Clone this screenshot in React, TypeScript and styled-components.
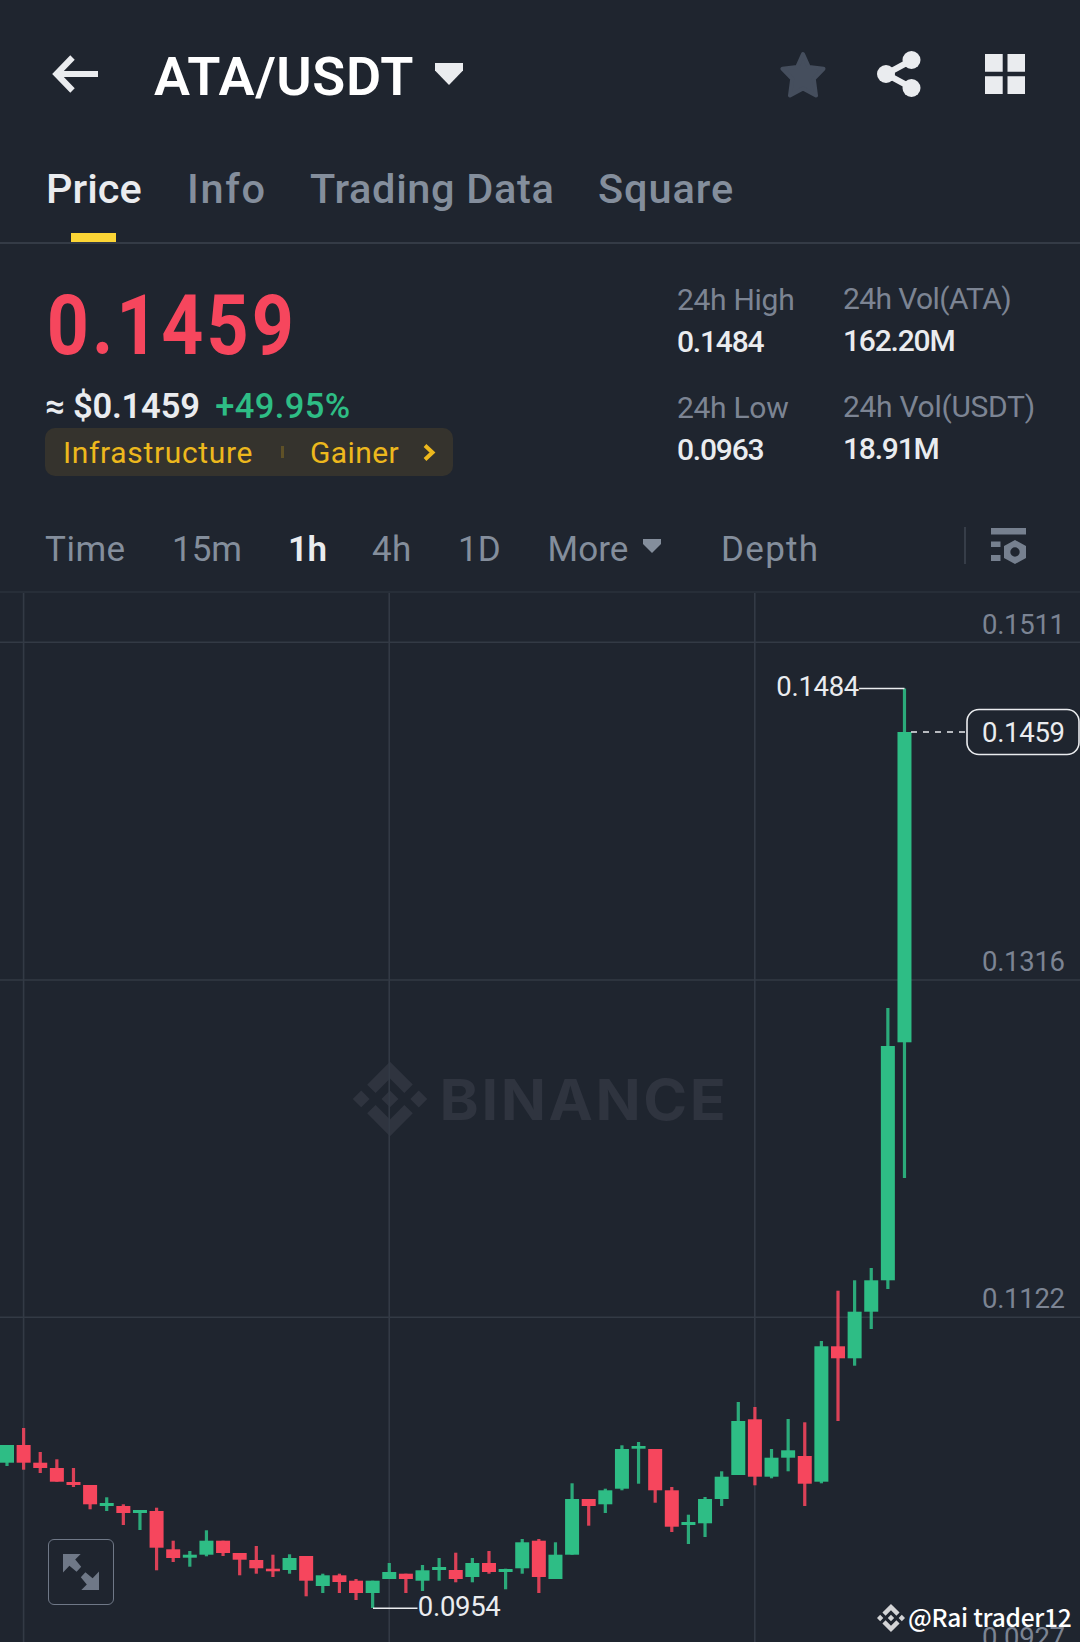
import React from "react";
import styled, { createGlobalStyle } from "styled-components";

const UP = "#2ebd85";
const DOWN = "#f6465d";
const GREY = "#848e9c";
const LIGHT = "#eaecef";
const GRID = "#333a45";

const GlobalStyle = createGlobalStyle`
  body {
    margin: 0;
    background: #1f252f;
    font-family: Roboto, "Liberation Sans", sans-serif;
  }
`;

const Screen = styled.main`
  display: flex;
  flex-direction: column;
  width: 1080px;
  height: 1642px;
  overflow: hidden;
  background: #1f252f;
  color: ${LIGHT};
`;

const Header = styled.header`
  display: flex;
  align-items: center;
  box-sizing: border-box;
  height: 148px;
  padding: 0 55px 0 52px;
`;

const Pair = styled.h1`
  display: flex;
  align-items: center;
  gap: 21px;
  margin: 0 auto 0 56px;
  color: #fff;
`;

const PairName = styled.span`
  width: 260px;
  padding-top: 5px;
  font-size: 54px;
  font-weight: 600;
  line-height: 60px;
  letter-spacing: 0.6px;
  white-space: nowrap;
`;

const Actions = styled.div`
  display: flex;
  align-items: center;
`;

const StarIcon = styled.svg`
  margin-right: 51px;
`;

const ShareIcon = styled.svg`
  margin-right: 64px;
`;

const Tabs = styled.nav`
  display: flex;
  height: 94px;
  padding-left: 46px;
  border-bottom: 2px solid #343b46;
`;

const Tab = styled.a<{ $active?: boolean; $slot: number; $track: number }>`
  position: relative;
  box-sizing: border-box;
  width: ${(p) => p.$slot}px;
  padding-bottom: 12px;
  color: ${(p) => (p.$active ? LIGHT : GREY)};
  font-size: 41.5px;
  font-weight: 500;
  line-height: 82px;
  letter-spacing: ${(p) => p.$track}px;
  white-space: nowrap;

  &::after {
    content: "";
    display: ${(p) => (p.$active ? "block" : "none")};
    position: absolute;
    bottom: 0;
    left: 25px;
    width: 45px;
    height: 9px;
    background: #fcd535;
  }
`;

const Quote = styled.section`
  display: flex;
  box-sizing: border-box;
  height: 263px;
  padding: 37px 0 0 45px;
`;

const PriceColumn = styled.div`
  width: 632px;
`;

const LastPrice = styled.div`
  transform: scaleX(0.88);
  transform-origin: left;
  color: ${DOWN};
  font-size: 83.5px;
  font-weight: 700;
  line-height: 90px;
  letter-spacing: 3.4px;
  padding-left: 2px;
`;

const Converted = styled.div`
  display: flex;
  gap: 15.5px;
  margin-top: 14px;
  height: 43px;
  font-size: 34.5px;
  font-weight: 600;
  line-height: 43px;
  letter-spacing: -0.2px;
  white-space: nowrap;
`;

const Change = styled.span`
  color: ${UP};
  font-weight: 500;
  letter-spacing: 0.4px;
`;

const Tags = styled.div`
  display: flex;
  align-items: center;
  box-sizing: border-box;
  width: 408px;
  height: 48px;
  padding-left: 18px;
  border-radius: 10px;
  background: #35332d;
  color: #edb81d;
  font-size: 30px;
  line-height: 48px;
`;

const TagName = styled.span<{ $slot: number; $track: number }>`
  width: ${(p) => p.$slot}px;
  padding-top: 1px;
  letter-spacing: ${(p) => p.$track}px;
`;

const TagRule = styled.i`
  width: 3px;
  height: 12px;
  margin-right: 26px;
  background: #5f5127;
`;

const Stats = styled.div`
  display: flex;
  padding-top: 1px;
`;

const StatColumn = styled.div<{ $slot: number; $lift?: number }>`
  display: flex;
  flex-direction: column;
  gap: 30px;
  width: ${(p) => p.$slot}px;
  margin-top: -${(p) => p.$lift ?? 0}px;
`;

const Stat = styled.div`
  display: flex;
  flex-direction: column;
  gap: 6px;
  font-size: 30px;
  line-height: 36px;
  white-space: nowrap;
`;

const StatLabel = styled.span<{ $track?: number }>`
  color: #7c8493;
  letter-spacing: ${(p) => p.$track ?? -0.3}px;
`;

const StatValue = styled.span`
  letter-spacing: -1.2px;
  font-weight: 500;
`;

const Intervals = styled.nav`
  display: flex;
  align-items: center;
  height: 84px;
  padding-left: 45px;
  border-bottom: 2px solid #272e38;
`;

const Interval = styled.a<{ $active?: boolean; $slot: number; $track: number }>`
  display: flex;
  align-items: center;
  width: ${(p) => p.$slot}px;
  color: ${(p) => (p.$active ? LIGHT : GREY)};
  font-size: 35px;
  font-weight: ${(p) => (p.$active ? 600 : 400)};
  letter-spacing: ${(p) => p.$track}px;
  white-space: nowrap;
`;

const MoreCaret = styled.svg`
  margin: 0 0 7px 14px;
`;

const BarRule = styled.i`
  width: 2px;
  height: 37px;
  margin: 0 25px 7px 0;
  background: #363d48;
`;

const SettingsIcon = styled.svg`
  margin-bottom: 6px;
`;

const Chart = styled.section`
  position: relative;
  height: 1049px;
`;

const ChartDrawing = styled.svg`
  display: block;
  font-family: Roboto, "Liberation Sans", sans-serif;
  font-size: 27.5px;
`;

const Wordmark = styled.text`
  font-family: Inter, sans-serif;
  font-size: 57px;
  font-weight: 700;
  letter-spacing: 2.5px;
`;

const ExpandButton = styled.button`
  position: absolute;
  left: 48px;
  top: 946px;
  display: flex;
  align-items: center;
  justify-content: center;
  box-sizing: border-box;
  width: 66px;
  height: 66px;
  padding: 0;
  border: 1.5px solid #6f7887;
  border-radius: 6px;
  background: transparent;
`;

const Credit = styled.div`
  position: absolute;
  left: 877px;
  top: 1007px;
  display: flex;
  align-items: center;
  gap: 3px;
  height: 36px;
  color: #fff;
  font-family: "Noto Sans CJK SC", "Noto Sans", sans-serif;
  font-size: 24.5px;
  font-weight: 500;
  line-height: 34px;
  letter-spacing: -0.25px;
  white-space: nowrap;
`;

const CreditName = styled.span`
  margin-top: -2px;
`;

const LOGO =
  "M16.624 13.9202l2.7175 2.7154-7.353 7.353-7.353-7.352 2.7175-2.7164 4.6355 4.6595 4.6356-4.6595zm4.6366-4.6366L24 12l-2.7154 2.7164L18.5682 12l2.6924-2.7164zm-9.272.001l2.7163 2.6914-2.7164 2.7174v-.001L9.2721 12l2.7164-2.7154zm-9.2722-.001L5.4088 12l-2.6914 2.6924L0 12l2.7164-2.7164zM11.9885.0115l7.353 7.329-2.7174 2.7154-4.6356-4.6356-4.6355 4.6595-2.7174-2.7154 7.353-7.353z";

// [rising, high, body top, body bottom, low] in screen rows
type Candle = [number, number, number, number, number];

const CANDLES: Candle[] = [
  [1, 1445, 1445, 1462.7, 1466],
  [0, 1428, 1445, 1462.7, 1469.7],
  [0, 1452, 1462.7, 1468, 1473],
  [0, 1459.3, 1468, 1481.7, 1481.7],
  [0, 1468, 1482, 1485, 1487],
  [0, 1485, 1485, 1504.3, 1509.3],
  [1, 1497.3, 1503, 1506, 1511],
  [0, 1504.3, 1506, 1513, 1525],
  [1, 1510, 1510, 1513, 1530],
  [0, 1507.7, 1511, 1547.7, 1570.3],
  [0, 1540.7, 1549.3, 1558, 1562],
  [1, 1551, 1554.7, 1557.7, 1566.7],
  [1, 1530.3, 1540.7, 1554.7, 1556.3],
  [0, 1540.7, 1540.7, 1553, 1556],
  [0, 1553, 1553, 1559.7, 1575.3],
  [0, 1546, 1560, 1568.3, 1573.7],
  [0, 1554.7, 1568.7, 1571.3, 1577],
  [1, 1554.3, 1558, 1570, 1573.7],
  [0, 1556, 1556, 1580.7, 1596.3],
  [1, 1573.7, 1575.3, 1586, 1593],
  [0, 1573.7, 1575.3, 1582, 1593],
  [0, 1579, 1580.7, 1593, 1600],
  [1, 1580.7, 1580.7, 1593, 1608],
  [1, 1563, 1572, 1579, 1579],
  [0, 1573.7, 1573.7, 1579, 1593],
  [1, 1565, 1570.3, 1580.7, 1591],
  [1, 1558, 1567, 1570, 1580.7],
  [0, 1552.7, 1570, 1579, 1582.3],
  [1, 1558, 1563, 1577, 1582.3],
  [0, 1551, 1563, 1572, 1573.7],
  [1, 1568.7, 1569, 1572, 1589.3],
  [1, 1539, 1542.3, 1568.3, 1573.7],
  [0, 1539, 1540.7, 1577, 1593],
  [1, 1542.3, 1554.7, 1579, 1579],
  [1, 1483.3, 1499, 1554.7, 1554.7],
  [0, 1499, 1499, 1506, 1525.7],
  [1, 1488.7, 1490.3, 1504.3, 1513],
  [1, 1445.3, 1449, 1488.7, 1490.3],
  [1, 1442, 1446, 1448.7, 1483.7],
  [0, 1449, 1449, 1490.3, 1502.7],
  [0, 1487, 1490.3, 1526.7, 1532],
  [1, 1514.7, 1522, 1525, 1544],
  [1, 1497, 1499, 1523.3, 1537],
  [1, 1471.3, 1476.7, 1499, 1506],
  [1, 1402, 1421, 1475, 1475],
  [0, 1407, 1419.3, 1476.7, 1485.3],
  [1, 1449, 1457.7, 1476.7, 1478.3],
  [1, 1419, 1450.3, 1457.7, 1471.3],
  [0, 1422.3, 1456, 1483.7, 1506],
  [1, 1341, 1346.3, 1481.7, 1483.3],
  [0, 1290.7, 1346.3, 1358.3, 1421],
  [1, 1280.3, 1311.7, 1358.3, 1365.7],
  [1, 1268, 1280.3, 1311.7, 1329],
  [1, 1008, 1046, 1280.3, 1289],
  [1, 688.5, 732, 1042.3, 1178],
];

const AXIS = [
  { label: "0.1511", y: 642.3, baseline: 634 },
  { label: "0.1316", y: 980, baseline: 970.8 },
  { label: "0.1122", y: 1317.3, baseline: 1308 },
  { label: "0.0927", y: 1655, baseline: 1646.5 },
];

const COLUMNS = [23.6, 389.2, 754.8];

function CandleMark({ candle, index }: { candle: Candle; index: number }) {
  const [rising, high, top, bottom, low] = candle;
  const x = 7 + index * 16.62;
  return (
    <g fill={rising ? UP : DOWN}>
      <rect x={x - 1.6} y={high} width={3.2} height={low - high} opacity={0.88} />
      <rect x={x - 7} y={top} width={14} height={bottom - top} />
    </g>
  );
}

function PriceChart() {
  return (
    <Chart>
      <ChartDrawing width={1080} height={1049} viewBox="0 593 1080 1049">
        <g fill="#2f343f">
          <path d={LOGO} transform="translate(352.8 1061.8) scale(3.1)" />
          <Wordmark x={439.5} y={1120} textLength={289} lengthAdjust="spacingAndGlyphs">
            BINANCE
          </Wordmark>
        </g>
        <g stroke={GRID} strokeWidth={1.6}>
          {AXIS.map((a) => (
            <line key={a.label} x1={0} x2={1080} y1={a.y} y2={a.y} />
          ))}
          {COLUMNS.map((x) => (
            <line key={x} x1={x} x2={x} y1={593} y2={1642} />
          ))}
        </g>
        <g fill="#7c8493">
          {AXIS.map((a) => (
            <text key={a.label} x={982} y={a.baseline} textLength={83}>
              {a.label}
            </text>
          ))}
        </g>
        {CANDLES.map((c, i) => (
          <CandleMark key={i} candle={c} index={i} />
        ))}
        <g stroke={LIGHT} strokeWidth={1.6} fill="none">
          <path d="M859 688.5H904.5" />
          <path d="M373 1608.3H417.5" />
          <path d="M911 732H966" strokeDasharray="6 6" />
          <rect x={967} y={709.5} width={112} height={45} rx={12} />
        </g>
        <g fill={LIGHT}>
          <text x={776.3} y={696} textLength={83}>0.1484</text>
          <text x={982} y={742} textLength={83}>0.1459</text>
          <text x={417.8} y={1615.7} textLength={83}>0.0954</text>
        </g>
      </ChartDrawing>
      <ExpandButton aria-label="Expand chart">
        <svg width={36} height={36} viewBox="0 0 36 36" fill="#6f7887">
          <path d="M0 0H17.7L12.2 5.6L18.2 12.8L13.6 17.8L6.4 11.8L0 18.4Z" />
          <path d="M36 36H18.3L23.8 30.4L17.8 23.2L22.4 18.2L29.6 24.2L36 17.6Z" />
        </svg>
      </ExpandButton>
      <Credit>
        <svg width={28} height={28} viewBox="0 0 24 24" fill="#d3d4d6">
          <path d={LOGO} />
        </svg>
        <CreditName>@Rai trader12</CreditName>
      </Credit>
    </Chart>
  );
}

export default function App() {
  return (
    <Screen>
      <GlobalStyle />
      <Header>
        <svg width={46} height={38} viewBox="0 0 46 38" fill="none" stroke={LIGHT} strokeWidth={6.2}>
          <path d="M46 19H5" />
          <path d="M20.5 2.5L4.5 19L20.5 35.5" />
        </svg>
        <Pair>
          <PairName>ATA/USDT</PairName>
          <svg width={28} height={22} viewBox="0 0 28 22" fill={LIGHT}>
            <path d="M0 0H28V7.5L14 22L0 7.5Z" />
          </svg>
        </Pair>
        <Actions>
          <StarIcon width={46} height={47} viewBox="0 0 46 47" fill="#454e5d" stroke="#454e5d" strokeWidth={4} strokeLinejoin="round">
            <path d="M23 3L28.8 16L43.5 17.8L33.8 27.8L36 44.5L23 37.5L10 44.5L12.2 27.8L2.5 17.8L17.2 16Z" />
          </StarIcon>
          <ShareIcon width={44} height={46} viewBox="0 0 44 46" fill={LIGHT} stroke={LIGHT}>
            <path d="M35 9L9 23L35 37" fill="none" strokeWidth={6} />
            <circle cx={34.5} cy={9} r={9} stroke="none" />
            <circle cx={9} cy={23} r={9} stroke="none" />
            <circle cx={34.5} cy={37} r={9} stroke="none" />
          </ShareIcon>
          <svg width={40} height={40} viewBox="0 0 40 40" fill={LIGHT}>
            <path d="M0 0H17.7V17.7H0ZM22.5 0H40V17.7H22.5ZM0 22.3H17.7V40H0ZM22.5 22.3H40V40H22.5Z" />
          </svg>
        </Actions>
      </Header>
      <Tabs>
        <Tab $active $slot={141} $track={0}>Price</Tab>
        <Tab $slot={123} $track={1.7}>Info</Tab>
        <Tab $slot={288} $track={0.65}>Trading Data</Tab>
        <Tab $slot={150} $track={0.95}>Square</Tab>
      </Tabs>
      <Quote>
        <PriceColumn>
          <LastPrice>0.1459</LastPrice>
          <Converted>
            <span>≈ $0.1459</span>
            <Change>+49.95%</Change>
          </Converted>
          <Tags>
            <TagName $slot={218} $track={0.65}>Infrastructure</TagName>
            <TagRule />
            <TagName $slot={113} $track={0.4}>Gainer</TagName>
            <svg width={13} height={17} viewBox="0 0 13 17" fill="none" stroke="#edb81d" strokeWidth={4}>
              <path d="M2 1.5L9.5 8.5L2 15.5" />
            </svg>
          </Tags>
        </PriceColumn>
        <Stats>
          <StatColumn $slot={166}>
            <Stat>
              <StatLabel>24h High</StatLabel>
              <StatValue>0.1484</StatValue>
            </Stat>
            <Stat>
              <StatLabel>24h Low</StatLabel>
              <StatValue>0.0963</StatValue>
            </Stat>
          </StatColumn>
          <StatColumn $slot={200} $lift={1}>
            <Stat>
              <StatLabel $track={-0.6}>24h Vol(ATA)</StatLabel>
              <StatValue>162.20M</StatValue>
            </Stat>
            <Stat>
              <StatLabel>24h Vol(USDT)</StatLabel>
              <StatValue>18.91M</StatValue>
            </Stat>
          </StatColumn>
        </Stats>
      </Quote>
      <Intervals>
        <Interval $slot={127} $track={0.5}>Time</Interval>
        <Interval $slot={116} $track={0}>15m</Interval>
        <Interval $active $slot={84} $track={-0.5}>1h</Interval>
        <Interval $slot={86} $track={0.4}>4h</Interval>
        <Interval $slot={89.5} $track={0}>1D</Interval>
        <Interval $slot={173.5} $track={0.1}>
          More
          <MoreCaret width={18} height={14} viewBox="0 0 18 14" fill={GREY}>
            <path d="M0 0H18V5L9 14L0 5Z" />
          </MoreCaret>
        </Interval>
        <Interval $slot={243} $track={1.3}>Depth</Interval>
        <BarRule />
        <SettingsIcon width={36} height={36} viewBox="0 0 36 36" fill="#76808f">
          <path d="M0 0H35V6.5H0ZM0 13.5H9.5V19H0ZM0 27H9.5V33H0Z" />
          <path fillRule="evenodd" d="M24 12L35 18V30L24 36L13 30V18ZM24 19.3A4.7 4.7 0 1 0 24 28.7A4.7 4.7 0 1 0 24 19.3Z" />
        </SettingsIcon>
      </Intervals>
      <PriceChart />
    </Screen>
  );
}
